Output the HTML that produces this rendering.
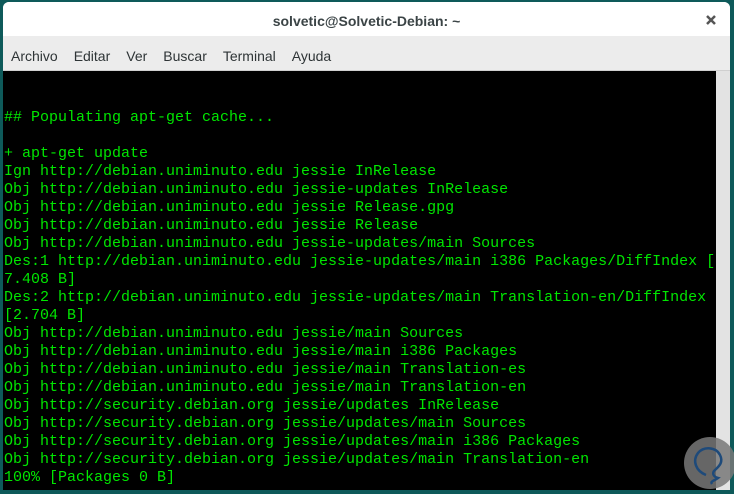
<!DOCTYPE html>
<html><head><style>
body{margin:0;width:734px;height:490px;background:#0e5a5a;overflow:hidden;position:relative;font-family:"Liberation Sans",sans-serif}
.win{position:absolute;left:3px;top:2px;width:727px;height:488px;background:#fff;border-radius:6px 6px 0 0;overflow:hidden}
.title{height:34px;background:#fff;text-align:center;line-height:38px;font-size:14px;font-weight:bold;color:#3b4446}
.x{position:absolute;right:14px;top:13px;width:10px;height:10px}
.menu{height:34px;background:#ececec;border-bottom:1px solid #d0d0d0;font-size:14px;color:#2e3436;line-height:40px}
.menu span{margin-left:8px;margin-right:8px}
.term{position:absolute;left:0;top:69px;width:713px;height:417px;padding-top:2px;background:#000;color:#00e600;font-family:"Liberation Mono",monospace;font-size:15px;line-height:18px;white-space:pre;padding-left:1px;overflow:hidden}
.sb{position:absolute;left:713px;top:69px;width:14px;height:419px;background:#e3e3e3}
.logo{position:absolute;left:684px;top:437px;width:52px;height:52px;border-radius:50%;background:rgba(120,120,120,.85)}
</style></head><body>
<div class="win">
<div class="title">solvetic@Solvetic-Debian: ~</div>
<svg class="x" viewBox="0 0 10 10"><path d="M1 1L9 9M9 1L1 9" stroke="#555" stroke-width="2.5"/></svg>
<div class="menu"><span>Archivo</span><span>Editar</span><span>Ver</span><span>Buscar</span><span>Terminal</span><span>Ayuda</span></div>
<div class="term">

## Populating apt-get cache...

+ apt-get update
Ign http://debian.uniminuto.edu jessie InRelease
Obj http://debian.uniminuto.edu jessie-updates InRelease
Obj http://debian.uniminuto.edu jessie Release.gpg
Obj http://debian.uniminuto.edu jessie Release
Obj http://debian.uniminuto.edu jessie-updates/main Sources
Des:1 http://debian.uniminuto.edu jessie-updates/main i386 Packages/DiffIndex [
7.408 B]
Des:2 http://debian.uniminuto.edu jessie-updates/main Translation-en/DiffIndex
[2.704 B]
Obj http://debian.uniminuto.edu jessie/main Sources
Obj http://debian.uniminuto.edu jessie/main i386 Packages
Obj http://debian.uniminuto.edu jessie/main Translation-es
Obj http://debian.uniminuto.edu jessie/main Translation-en
Obj http://security.debian.org jessie/updates InRelease
Obj http://security.debian.org jessie/updates/main Sources
Obj http://security.debian.org jessie/updates/main i386 Packages
Obj http://security.debian.org jessie/updates/main Translation-en
100% [Packages 0 B]</div>
<div class="sb"></div>
</div>
<div class="logo"><svg width="52" height="52" viewBox="0 0 52 52"><path d="M22 38C12 34 8 24 14 16C20 9 32 10 36 18C40 26 34 30 30 34C28 37 30 40 34 41C30 44 26 44 28 47" fill="none" stroke="#1e4a7a" stroke-width="2.5"/></svg></div>
</body></html>
